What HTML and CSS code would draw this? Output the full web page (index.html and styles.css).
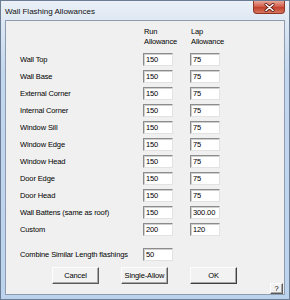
FILE: index.html
```html
<!DOCTYPE html>
<html lang="en">
<head>
    <meta charset="UTF-8">
    <title>Wall Flashing Allowances</title>
    <link rel="stylesheet" href="styles.css">
</head>
<body>
    <div class="window">
        <div class="titlebar">
            <span class="title">Wall Flashing Allowances</span>
            <div class="close">
                <svg width="11" height="9" viewBox="0 0 11 9">
                    <path d="M2 1.5 L9 7.5 M9 1.5 L2 7.5" stroke="#5a1c14" stroke-width="3" stroke-linecap="round"/>
                    <path d="M2 1.5 L9 7.5 M9 1.5 L2 7.5" stroke="#fff" stroke-width="1.6" stroke-linecap="round"/>
                </svg>
            </div>
        </div>
        <div class="client">
            <div class="grid">
                <span></span>
                <span class="head">Run<br>Allowance</span>
                <span class="head">Lap<br>Allowance</span>

                <span class="label">Wall Top</span>
                <div class="field">150</div>
                <div class="field">75</div>

                <span class="label">Wall Base</span>
                <div class="field">150</div>
                <div class="field">75</div>

                <span class="label">External Corner</span>
                <div class="field">150</div>
                <div class="field">75</div>

                <span class="label">Internal Corner</span>
                <div class="field">150</div>
                <div class="field">75</div>

                <span class="label">Window Sill</span>
                <div class="field">150</div>
                <div class="field">75</div>

                <span class="label">Window Edge</span>
                <div class="field">150</div>
                <div class="field">75</div>

                <span class="label">Window Head</span>
                <div class="field">150</div>
                <div class="field">75</div>

                <span class="label">Door Edge</span>
                <div class="field">150</div>
                <div class="field">75</div>

                <span class="label">Door Head</span>
                <div class="field">150</div>
                <div class="field">75</div>

                <span class="label">Wall Battens (same as roof)</span>
                <div class="field">150</div>
                <div class="field">300.00</div>

                <span class="label">Custom</span>
                <div class="field">200</div>
                <div class="field">120</div>

                <span class="label spaced">Combine Similar Length flashings</span>
                <div class="field spaced">50</div>
                <span></span>
            </div>
            <div class="buttons">
                <div class="btn">Cancel</div>
                <div class="btn">Single-Allow</div>
                <div class="btn default">OK</div>
            </div>
            <div class="btn help">?</div>
        </div>
    </div>
</body>
</html>
```

FILE: styles.css
```css
*{
    box-sizing: border-box;
}
body{
    margin: 0;
    font-family: "Liberation Sans", Arial, sans-serif;
    font-size: 7.5px;
    letter-spacing: -0.12px;
    color: #000;
}
.window{
    width: 290px;
    height: 300px;
    border: 1px solid #6b7d94;
    background: linear-gradient(#eaf0f6, #e2eaf4 14px, #c3d7ee 70px, #bcd3ee);
    display: flex;
    flex-direction: column;
}
.titlebar{
    height: 19px;
    display: flex;
    align-items: flex-start;
    padding-left: 4px;
}
.title{
    font-size: 8px;
    letter-spacing: 0;
    margin-top: 6px;
    color: #111;
}
.close{
    margin-left: auto;
    margin-right: 4px;
    width: 32px;
    height: 13px;
    border: 1px solid #8f3426;
    border-top: none;
    border-radius: 0 0 4px 4px;
    background: linear-gradient(#e9a799, #d2604c 45%, #c2402b 55%, #d6785f);
    display: flex;
    align-items: center;
    justify-content: center;
}
.client{
    flex: 1;
    margin: 0 4px 4px;
    border: 1px solid #8d9cb0;
    background: #f0f0f0;
    position: relative;
    padding: 6px 0 0 14px;
}
.grid{
    display: grid;
    grid-template-columns: 106px 30px 30px;
    column-gap: 17px;
    row-gap: 4px;
    align-items: center;
}
.head{
    line-height: 10px;
    white-space: nowrap;
    padding-bottom: 2px;
    padding-left: 1px;
}
.label{
    white-space: nowrap;
    line-height: 13px;
}
.field{
    height: 13px;
    background: #fff;
    border: 1px solid;
    border-color: #8c8c8c #e2e2e2 #e2e2e2 #8c8c8c;
    box-shadow: inset 1px 1px 0 #cfcfcf;
    padding-left: 2px;
    line-height: 11px;
}
.spaced{
    margin-top: 8px;
}
.buttons{
    display: flex;
    gap: 22px;
    margin-top: 6px;
    padding-left: 32px;
}
.btn{
    width: 47px;
    height: 17px;
    background: #f2f2f2;
    border: 1px solid;
    border-color: #fdfdfd #5a5a5a #5a5a5a #fdfdfd;
    box-shadow: inset -1px -1px 0 #a8a8a8;
    display: flex;
    align-items: center;
    justify-content: center;
    white-space: nowrap;
}
.default{
    border-color: #fdfdfd #404040 #404040 #fdfdfd;
}
.help{
    position: absolute;
    right: 1px;
    bottom: 0;
    width: 13px;
    height: 11px;
}
```
